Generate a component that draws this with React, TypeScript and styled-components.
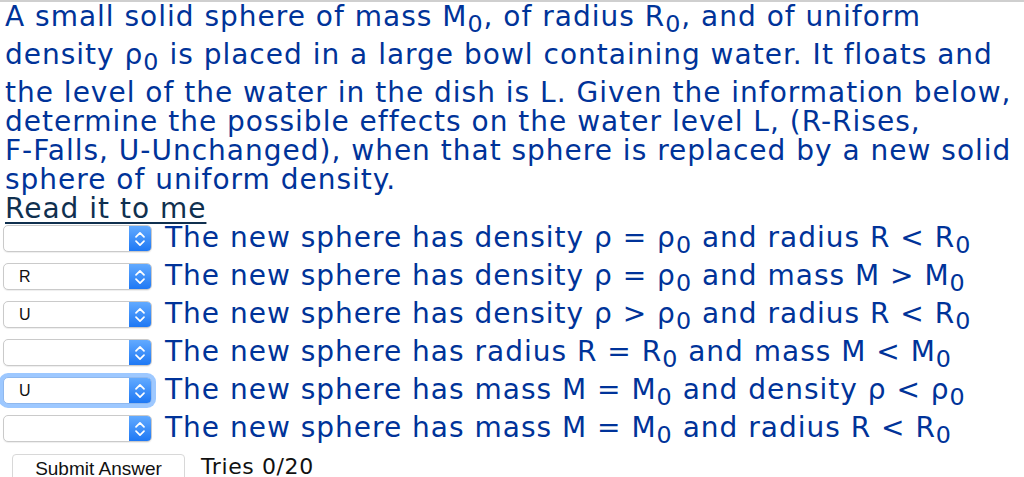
import React from "react";
import styled, { createGlobalStyle } from "styled-components";

const Global = createGlobalStyle`
  html, body { margin: 0; padding: 0; background: #fff; }
  body { font-family: "DejaVu Sans", Verdana, sans-serif; }
`;

const Page = styled.div`
  border-top: 2px solid #cfcfcf;
  width: 1024px;
  height: 477px;
  overflow: hidden;
  padding-left: 5px;
  box-sizing: border-box;
`;

const Question = styled.p`
  margin: 0;
  font-size: 28px;
  letter-spacing: 1px;
  line-height: 29px;
  color: #003399;
`;

const Line = styled.span<{ $sub?: boolean }>`
  display: block;
  white-space: nowrap;
  padding-bottom: ${(p) => (p.$sub ? "9px" : "0")};
`;

const Sub = styled.sub`
  font-size: 0.85em;
  vertical-align: -6px;
  line-height: 0;
`;

const ReadLink = styled.a`
  display: block;
  font-size: 28px;
  letter-spacing: 1px;
  line-height: 29px;
  color: #10304f;
  text-decoration: underline;
  text-decoration-thickness: 2px;
  text-underline-offset: 4px;
`;

const Options = styled.div`
  display: flex;
  flex-direction: column;
  gap: 11px;
  margin-top: 2px;
  margin-left: -2px;
`;

const Row = styled.div`
  display: flex;
  align-items: center;
  gap: 13px;
  height: 27px;
`;

const SelectBox = styled.div<{ $focused?: boolean }>`
  display: flex;
  width: 149px;
  height: 27px;
  box-sizing: border-box;
  border: 1px solid ${(p) => (p.$focused ? "#8fb8ee" : "#cacaca")};
  border-radius: 5px;
  background: #fff;
  overflow: hidden;
  flex: none;
  box-shadow: ${(p) =>
    p.$focused ? "0 0 0 4px rgba(140, 190, 255, 0.85)" : "0 1px 1px rgba(0,0,0,0.07)"};
`;

const SelectValue = styled.div`
  flex: 1;
  font-family: "Liberation Sans", Arial, sans-serif;
  font-size: 16px;
  color: #111;
  padding-left: 15px;
  display: flex;
  align-items: center;
`;

const Stepper = styled.div`
  width: 22px;
  background: linear-gradient(#62aaff, #1e78f4);
  display: flex;
  align-items: center;
  justify-content: center;
`;

const OptionText = styled.span`
  font-size: 28px;
  letter-spacing: 1px;
  line-height: 29px;
  color: #003399;
  white-space: nowrap;
  margin-bottom: 3px;
`;

const Footer = styled.div`
  display: flex;
  align-items: center;
  gap: 16px;
  margin-top: 12px;
  margin-left: 7px;
`;

const SubmitButton = styled.button`
  width: 173px;
  height: 28px;
  box-sizing: border-box;
  border: 1px solid #d8d8d8;
  border-radius: 4px;
  background: #fff;
  font-family: "Liberation Sans", Arial, sans-serif;
  font-size: 19px;
  color: #111;
  padding: 1px 0 0;
`;

const Tries = styled.span`
  font-size: 22px;
  line-height: 26px;
  letter-spacing: 0.6px;
  color: #111;
  margin-bottom: 2px;
`;

const Chevrons = () => (
  <svg width="12" height="18" viewBox="0 0 12 18">
    <path d="M2 6.8 L6 2.8 L10 6.8" fill="none" stroke="#fff" strokeWidth="1.7" strokeLinecap="round" strokeLinejoin="round" />
    <path d="M2 11.2 L6 15.2 L10 11.2" fill="none" stroke="#fff" strokeWidth="1.7" strokeLinecap="round" strokeLinejoin="round" />
  </svg>
);

const Select = ({ value, focused }: { value: string; focused?: boolean }) => (
  <SelectBox $focused={focused}>
    <SelectValue>{value}</SelectValue>
    <Stepper>
      <Chevrons />
    </Stepper>
  </SelectBox>
);

const options: { value: string; focused?: boolean; text: React.ReactNode }[] = [
  { value: "", text: <>The new sphere has density ρ = ρ<Sub>0</Sub> and radius R &lt; R<Sub>0</Sub></> },
  { value: "R", text: <>The new sphere has density ρ = ρ<Sub>0</Sub> and mass M &gt; M<Sub>0</Sub></> },
  { value: "U", text: <>The new sphere has density ρ &gt; ρ<Sub>0</Sub> and radius R &lt; R<Sub>0</Sub></> },
  { value: "", text: <>The new sphere has radius R = R<Sub>0</Sub> and mass M &lt; M<Sub>0</Sub></> },
  { value: "U", focused: true, text: <>The new sphere has mass M = M<Sub>0</Sub> and density ρ &lt; ρ<Sub>0</Sub></> },
  { value: "", text: <>The new sphere has mass M = M<Sub>0</Sub> and radius R &lt; R<Sub>0</Sub></> },
];

export default function App() {
  return (
    <Page>
      <Global />
      <Question>
        <Line $sub>A small solid sphere of mass M<Sub>0</Sub>, of radius R<Sub>0</Sub>, and of uniform</Line>
        <Line $sub>density ρ<Sub>0</Sub> is placed in a large bowl containing water. It floats and</Line>
        <Line>the level of the water in the dish is L. Given the information below,</Line>
        <Line>determine the possible effects on the water level L, (R-Rises,</Line>
        <Line>F-Falls, U-Unchanged), when that sphere is replaced by a new solid</Line>
        <Line>sphere of uniform density.</Line>
      </Question>
      <ReadLink>Read it to me</ReadLink>
      <Options>
        {options.map((o, i) => (
          <Row key={i}>
            <Select value={o.value} focused={o.focused} />
            <OptionText>{o.text}</OptionText>
          </Row>
        ))}
      </Options>
      <Footer>
        <SubmitButton>Submit Answer</SubmitButton>
        <Tries>Tries 0/20</Tries>
      </Footer>
    </Page>
  );
}
